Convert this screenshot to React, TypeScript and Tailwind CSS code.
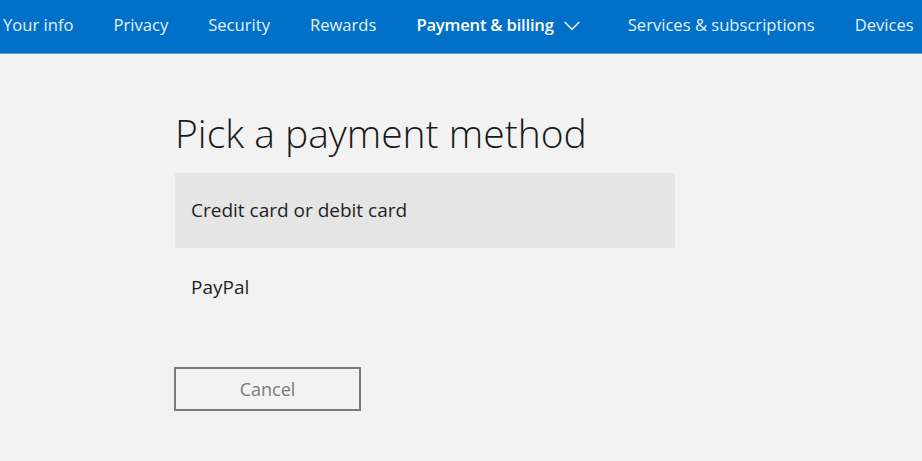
import { useState } from 'react'

const navItems = ['Your info', 'Privacy', 'Security', 'Rewards']

function Chevron() {
  return (
    <svg width="16" height="10" viewBox="0 0 16 10" fill="none" className="ml-[10px] mt-[1px]">
      <path d="M0.7 1 L8 8.3 L15.3 1" stroke="currentColor" strokeWidth="1.3" />
    </svg>
  )
}

export default function App() {
  const [selected, setSelected] = useState('card')

  return (
    <div
      className="w-[922px] h-[461px] overflow-hidden bg-[#f2f2f2]"
      style={{ fontFamily: '"Open Sans", "Noto Sans", sans-serif' }}
    >
      {/* Top nav */}
      <nav className="h-[54px] bg-[#0070c9] border-b border-[#5c9fd9] flex items-center pl-[3px] pb-[2px] text-[16.6px] text-[#e6f0fa] whitespace-nowrap">
        <div className="flex items-center gap-[40px]">
          {navItems.map((item) => (
            <a key={item} className="cursor-pointer">{item}</a>
          ))}
          <a className="flex items-center font-semibold text-white tracking-[-0.2px]">
            Payment &amp; billing
            <Chevron />
          </a>
          <a className="ml-[8px] cursor-pointer">Services &amp; subscriptions</a>
          <a className="cursor-pointer">Devices</a>
        </div>
      </nav>

      {/* Content */}
      <main className="pl-[175px] pt-[55px]">
        <h1 className="text-[39px] font-light leading-[48px] text-[#1a1a1a]">
          Pick a payment method
        </h1>

        <div className="mt-[16px] w-[500px] flex flex-col text-[19px] text-[#1f1f1f]">
          <button
            onClick={() => setSelected('card')}
            className={`h-[75px] pl-[16px] text-left ${selected === 'card' ? 'bg-[#e5e5e5]' : ''}`}
          >
            Credit card or debit card
          </button>
          <button
            onClick={() => setSelected('paypal')}
            className={`h-[78px] pl-[16px] text-left ${selected === 'paypal' ? 'bg-[#e5e5e5]' : ''}`}
          >
            PayPal
          </button>
        </div>

        <button className="mt-[41px] -ml-[1px] w-[187px] h-[44px] border-2 border-[#7a7a7a] text-[18px] text-[#7a7a7a]">
          Cancel
        </button>
      </main>
    </div>
  )
}
